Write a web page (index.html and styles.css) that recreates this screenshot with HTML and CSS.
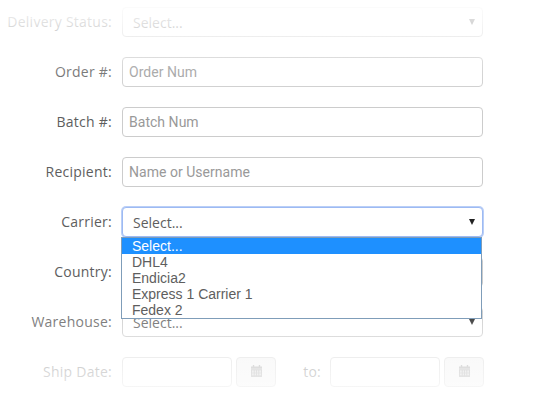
FILE: index.html
```html
<!DOCTYPE html>
<html>
<head>
<meta charset="utf-8">
<title>Filter</title>
<link rel="stylesheet" href="styles.css">
</head>
<body>
<form class="form">
  <div class="row">
    <label class="label">Delivery Status:</label>
    <div class="control select"><span>Select...</span><i class="caret"></i></div>
  </div>
  <div class="row">
    <label class="label">Order #:</label>
    <div class="control input"><span>Order Num</span></div>
  </div>
  <div class="row">
    <label class="label">Batch #:</label>
    <div class="control input"><span>Batch Num</span></div>
  </div>
  <div class="row">
    <label class="label">Recipient:</label>
    <div class="control input"><span>Name or Username</span></div>
  </div>
  <div class="row carrier">
    <label class="label">Carrier:</label>
    <div class="control select focus"><span>Select...</span><i class="caret"></i></div>
    <ul class="dropdown">
      <li class="active">Select...</li>
      <li>DHL4</li>
      <li>Endicia2</li>
      <li>Express 1 Carrier 1</li>
      <li>Fedex 2</li>
    </ul>
  </div>
  <div class="row">
    <label class="label">Country:</label>
    <div class="control select"><span>Select...</span><i class="caret"></i></div>
  </div>
  <div class="row">
    <label class="label">Warehouse:</label>
    <div class="control select"><span>Select...</span><i class="caret"></i></div>
  </div>
  <div class="row">
    <label class="label">Ship Date:</label>
    <div class="dates">
      <div class="date"></div>
      <div class="cal"><svg viewBox="0 0 12 13" width="11" height="12"><path d="M2 0h1.500v2H2zM8.500 0H10v2H8.500zM0 1.500h12V4H0z" fill="#888"/><path d="M0 4.500h12V13H0z" fill="#888"/><path d="M1 6h2v1.200H1zM4 6h1.500v1.200H4zM6.500 6H8v1.200H6.500zM9 6h2v1.200H9zM1 8h2v1.200H1zM4 8h1.500v1.200H4zM6.500 8H8v1.200H6.500zM9 8h2v1.200H9zM1 10h2v1.200H1zM4 10h1.500v1.200H4zM6.500 10H8v1.200H6.500zM9 10h2v1.200H9z" fill="#ddd"/></svg></div>
      <span class="to">to:</span>
      <div class="date"></div>
      <div class="cal"><svg viewBox="0 0 12 13" width="11" height="12"><path d="M2 0h1.500v2H2zM8.500 0H10v2H8.500zM0 1.500h12V4H0z" fill="#888"/><path d="M0 4.500h12V13H0z" fill="#888"/><path d="M1 6h2v1.200H1zM4 6h1.500v1.200H4zM6.500 6H8v1.200H6.500zM9 6h2v1.200H9zM1 8h2v1.200H1zM4 8h1.500v1.200H4zM6.500 8H8v1.200H6.500zM9 8h2v1.200H9zM1 10h2v1.200H1zM4 10h1.500v1.200H4zM6.500 10H8v1.200H6.500zM9 10h2v1.200H9z" fill="#ddd"/></svg></div>
    </div>
  </div>
</form>
</body>
</html>
```
FILE: styles.css
```css
* { box-sizing: border-box; }
html, body { margin: 0; height: 400px; overflow: hidden; background: #fff; }
body { font-family: "Open Sans", sans-serif; font-size: 14px; color: #555; }
.form { position: relative; display: flex; flex-direction: column; gap: 20px; padding-top: 7px; height: 400px; }
.form::after { content: ""; position: absolute; inset: 0; z-index: 1; pointer-events: none;
  background: linear-gradient(to bottom,
    rgba(255,255,255,.92) 7px, rgba(255,255,255,.82) 22px, rgba(255,255,255,.66) 37px,
    rgba(255,255,255,.33) 57px, rgba(255,255,255,.18) 72px, rgba(255,255,255,.1) 87px,
    rgba(255,255,255,0) 107px, rgba(255,255,255,0) 300px, rgba(255,255,255,.2) 322px,
    rgba(255,255,255,.33) 337px, rgba(255,255,255,.66) 357px, rgba(255,255,255,.75) 372px,
    rgba(255,255,255,.82) 387px, rgba(255,255,255,.9) 400px); }
.row { display: flex; align-items: center; height: 30px; gap: 10px; }
.label { width: 112px; text-align: right; font-size: 14px; color: #5e5e5e; letter-spacing: .25px; padding-bottom: 2px; }
.control { width: 361px; height: 30px; border: 1px solid #ccc; border-radius: 4px; background: #fff; display: flex; align-items: center; justify-content: space-between; }
.input { padding: 0 6px; color: #999; font-family: Roboto, sans-serif; letter-spacing: .03px; }
.select { padding: 0 7px 0 10px; color: #5e5e5e; }
.caret { width: 0; height: 0; border: 3.5px solid transparent; border-top: 6px solid #222; border-bottom: 0; }
.focus { border-color: #9dbaf3; box-shadow: 0 0 0 1px rgba(157, 186, 243, .7); }
.carrier { position: relative; z-index: 2; }
.dropdown { position: absolute; left: 121px; top: 30px; width: 361px; height: 82px; margin: 0; padding: 0; list-style: none; border: 1px solid #7f9db9; background: #fff; font-family: "Liberation Sans", sans-serif; font-size: 14px; line-height: 16px; overflow: hidden; }
.dropdown li { height: 16px; padding-left: 10px; color: #5e5e5e; }
.dropdown li.active { background: #1e90ff; color: #fff; }
.dates { display: flex; align-items: center; width: 362px; flex: none; }
.date { width: 110px; height: 30px; border: 1px solid #ccc; border-radius: 4px; flex: none; }
.cal { width: 40px; height: 30px; margin-left: 4px; padding-bottom: 3px; border: 1px solid #ccc; border-radius: 4px; background: #eee; display: flex; align-items: center; justify-content: center; flex: none; }
.to { width: 54px; flex: none; text-align: right; padding-right: 9px; letter-spacing: .25px; padding-bottom: 2px; }
```
